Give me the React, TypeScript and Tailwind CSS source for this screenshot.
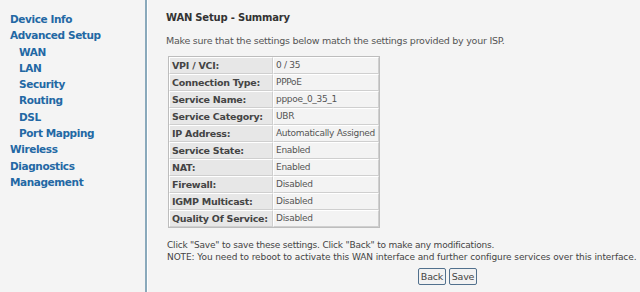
import React from 'react';

const menu: { label: string; sub?: boolean }[] = [
  { label: 'Device Info' },
  { label: 'Advanced Setup' },
  { label: 'WAN', sub: true },
  { label: 'LAN', sub: true },
  { label: 'Security', sub: true },
  { label: 'Routing', sub: true },
  { label: 'DSL', sub: true },
  { label: 'Port Mapping', sub: true },
  { label: 'Wireless' },
  { label: 'Diagnostics' },
  { label: 'Management' },
];

const rows: [string, string][] = [
  ['VPI / VCI:', '0 / 35'],
  ['Connection Type:', 'PPPoE'],
  ['Service Name:', 'pppoe_0_35_1'],
  ['Service Category:', 'UBR'],
  ['IP Address:', 'Automatically Assigned'],
  ['Service State:', 'Enabled'],
  ['NAT:', 'Enabled'],
  ['Firewall:', 'Disabled'],
  ['IGMP Multicast:', 'Disabled'],
  ['Quality Of Service:', 'Disabled'],
];

export default function App() {
  return (
    <div
      className="flex w-[640px] h-[292px] bg-[#f4f4f4] overflow-hidden"
      style={{ fontFamily: 'Tahoma, "DejaVu Sans", sans-serif' }}
    >
      <nav className="w-[145px] shrink-0 pt-[11px] pl-[10px]">
        {menu.map((m) => (
          <div
            key={m.label}
            className={`h-[16.3px] leading-[16px] text-[10.5px] tracking-[-0.4px] font-bold text-[#2368a4] whitespace-nowrap ${m.sub ? 'pl-[9px]' : ''}`}
          >
            {m.label}
          </div>
        ))}
      </nav>
      <div className="w-[2px] shrink-0 bg-[#8aa9bb]" />
      <div className="w-[1px] shrink-0 bg-white" />

      <main className="flex-1 pl-[18px] pt-[11px] text-[9.5px] tracking-[-0.25px] text-[#444]">
        <h1 className="font-bold text-[10px] tracking-[-0.2px] leading-[13px] text-[#333]">WAN Setup - Summary</h1>
        <p className="mt-[10px] leading-[13px] text-[#555]">
          Make sure that the settings below match the settings provided by your ISP.
        </p>

        <table className="mt-[9px] ml-[2px] border border-[#bdbdbd] border-separate border-spacing-0">
          <tbody>
            {rows.map(([k, v]) => (
              <tr key={k}>
                <td className="w-[104px] h-[17px] px-[2px] leading-[13px] text-[9.5px] tracking-[-0.25px] font-bold text-[#444] bg-[#e7e7e7] border border-white border-r-[#cfcfcf] border-b-[#cfcfcf] whitespace-nowrap">
                  {k}
                </td>
                <td className="w-[106px] h-[17px] px-[2px] leading-[13px] text-[9px] tracking-[-0.3px] text-[#555] bg-[#f3f3f3] border border-white border-r-[#cfcfcf] border-b-[#cfcfcf] whitespace-nowrap">
                  {v}
                </td>
              </tr>
            ))}
          </tbody>
        </table>

        <div className="mt-[11px] ml-[1px] leading-[12px] text-[9px] text-[#444] whitespace-nowrap">
          <div className="tracking-[-0.2px]">Click "Save" to save these settings. Click "Back" to make any modifications.</div>
          <div className="tracking-[-0.1px]">NOTE: You need to reboot to activate this WAN interface and further configure services over this interface.</div>
        </div>

        <div className="mt-[5px] ml-[252px] flex gap-[3px]">
          <button className="h-[17px] w-[28px] text-[9.5px] tracking-[-0.2px] leading-[13px] text-[#444] bg-[#f2f2f2] border border-[#51708d] rounded-[2px]">
            Back
          </button>
          <button className="h-[17px] w-[28px] text-[9.5px] tracking-[-0.2px] leading-[13px] text-[#444] bg-[#f2f2f2] border border-[#51708d] rounded-[2px]">
            Save
          </button>
        </div>
      </main>
    </div>
  );
}
